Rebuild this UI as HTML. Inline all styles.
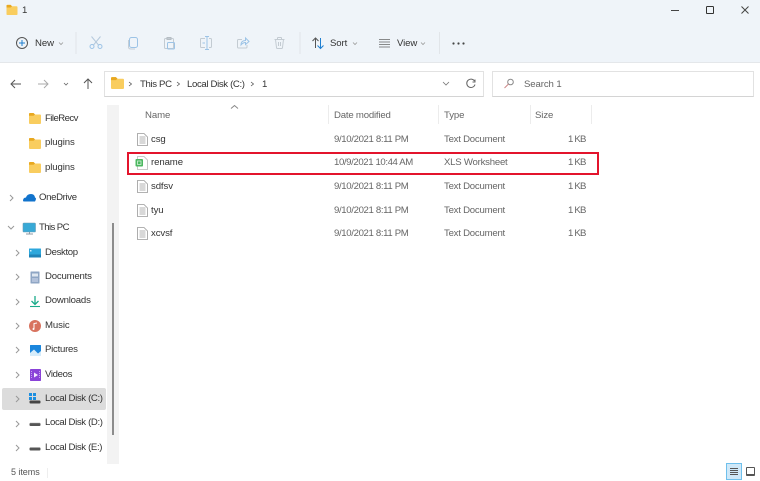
<!DOCTYPE html>
<html><head><meta charset="utf-8">
<style>
html,body{margin:0;padding:0}
body{width:760px;height:481px;position:relative;overflow:hidden;background:#fff;font-family:"Liberation Sans",sans-serif;font-size:9.6px;color:#333}
#w{position:absolute;left:0;top:0;width:760px;height:481px;filter:blur(.35px)}
.t{position:absolute;white-space:nowrap;line-height:12px;letter-spacing:-.35px}
.g{color:#666}
.n{letter-spacing:-.1px}
.y{letter-spacing:-.23px}
.k{letter-spacing:-.8px}
svg{position:absolute;overflow:visible}
.a{position:absolute}
</style></head><body><div id="w">
<div class="a" style="left:0;top:0;width:760px;height:62px;background:#eff4f9;border-bottom:1px solid #e4e7ea"></div>
<svg style="left:6px;top:4px" width="12" height="11" viewBox="0 0 12 12"><path d="M0 2.500Q0 1 1 1H4.500L6 2.500H11Q12 2.500 12 3.500V11Q12 12 11 12H1Q0 12 0 11Z" fill="#f9cd5f"/><path d="M0 1.800Q0 1 1 1H4.500L6 2.500L4.500 3.800H0Z" fill="#e8a820"/></svg>
<div class="t" style="left:22px;top:5px">1</div>
<svg style="left:0;top:0" width="760" height="62" fill="none" stroke="#333" stroke-width="1">
<path d="M671 10.500H679" stroke="#444"/><rect x="706.500" y="6.500" width="7" height="7" rx=".8" stroke="#333"/><path d="M741.500 6.500L748.500 13.500M748.500 6.500L741.500 13.500" stroke="#444"/>
<circle cx="22" cy="43" r="5.500" stroke="#555"/><path d="M22 40V46M19 43H25" stroke="#1f7fd0"/>
<path d="M59 42.500L61 44.500L63 42.500" stroke="#999" stroke-width=".8"/>
<path d="M91.500 36.500L98.500 45M100.500 36.500L93.500 45" stroke="#b5c9dc"/><circle cx="92" cy="46.500" r="2" stroke="#9cc3e6"/><circle cx="100" cy="46.500" r="2" stroke="#9cc3e6"/>
<rect x="129.500" y="37.500" width="8" height="10" rx="2" stroke="#9cc3e6"/><path d="M128.500 40V47Q128.500 49 131 49H135" stroke="#c5ced6"/>
<rect x="164.500" y="38.500" width="9" height="10" rx="1" stroke="#c3cbd2"/><rect x="167.500" y="42.500" width="7" height="6.500" rx="1" stroke="#9cc3e6"/><path d="M167 37.500H171V39.500H167Z" stroke="#b5bdc4"/>
<path d="M205 38.500H201Q200.500 38.500 200.500 39.500V46Q200.500 47.500 201 47.500H205M209 38.500H210.500Q211.500 38.500 211.500 39.500V46.500Q211.500 47.500 210.500 47.500H209" stroke="#c3cbd2"/><path d="M207 36.500V49.500M205 36.500H209M205 49.500H209M202.500 43H205" stroke="#9cc3e6"/>
<path d="M242 39.500H238.500Q237.500 39.500 237.500 40.500V47Q237.500 48 238.500 48H246Q247 48 247 47V45" stroke="#c3cbd2"/><path d="M241 45Q241 40.500 245.500 40.500V38L249 41.500L245.500 44.500V42.500Q243 42.500 241 45Z" stroke="#9cc3e6"/>
<path d="M274.500 39.500H284.500M277.500 39.500V38Q277.500 37.500 278 37.500H281Q281.500 37.500 281.500 38V39.500M275.500 39.500L276.500 47.500Q276.500 48.500 277.500 48.500H281.500Q282.500 48.500 282.500 47.500L283.500 39.500M278.500 42V46M280.500 42V46" stroke="#c3cbd2"/>
<path d="M315.500 48V38M312.500 41L315.500 38L318.500 41" stroke="#555"/><path d="M320.500 38V48.500M317.500 45.500L320.500 48.500L323.500 45.500" stroke="#1f7fd0"/>
<path d="M353 42.500L355 44.500L357 42.500" stroke="#999" stroke-width=".8"/>
<path d="M379 39.500H390M379 42H390M379 44.500H390M379 47H390" stroke="#666" stroke-width=".8"/>
<path d="M421 42.500L423 44.500L425 42.500" stroke="#999" stroke-width=".8"/>
<path d="M76 32V54M300 32V54M439.500 32V54" stroke="#e1e5e9"/>
</svg>
<svg style="left:452px;top:42px" width="14" height="3"><circle cx="1.500" cy="1.500" r="1.100" fill="#444"/><circle cx="6.500" cy="1.500" r="1.100" fill="#444"/><circle cx="11.500" cy="1.500" r="1.100" fill="#444"/></svg>
<div class="t n" style="left:35px;top:38px">New</div>
<div class="t n" style="left:330px;top:38px">Sort</div>
<div class="t n" style="left:397px;top:38px">View</div>

<!-- address -->
<div class="a" style="left:104px;top:71px;width:378px;height:24px;border:1px solid #e2e2e2;border-bottom-color:#d4d4d4"></div>
<div class="a" style="left:492px;top:71px;width:260px;height:24px;border:1px solid #e2e2e2;border-bottom-color:#d4d4d4"></div>
<svg style="left:0;top:62px" width="760" height="40" fill="none" stroke-width="1">
<path d="M21 22H11.500M15 18L11 22L15 26" stroke="#555"/>
<path d="M38 22H47.500M44 18L48 22L44 26" stroke="#aaa"/>
<path d="M64 21L66 23L68 21" stroke="#666" stroke-width=".8"/>
<path d="M88 27V17M84 21L88 17L92 21" stroke="#555"/>
<path d="M129 20L131.500 22L129 24M177 20L179.500 22L177 24M251 20L253.500 22L251 24" stroke="#555" stroke-width=".8"/>
<path d="M443 20L446 23L449 20" stroke="#777" stroke-width=".8"/>
<path d="M474.500 19A4.200 4.200 0 1 0 475 22.500M475 17.500V20H472.500" stroke="#666"/>
<circle cx="510.500" cy="20" r="2.800" stroke="#888"/><path d="M508.500 22L504.500 26" stroke="#c88"/>
</svg>
<svg style="left:111px;top:76px" width="13" height="13" viewBox="0 0 12 12"><path d="M0 2.500Q0 1 1 1H4.500L6 2.500H11Q12 2.500 12 3.500V11Q12 12 11 12H1Q0 12 0 11Z" fill="#f9cd5f"/><path d="M0 1.800Q0 1 1 1H4.500L6 2.500L4.500 3.800H0Z" fill="#e8a820"/></svg>
<div class="t" style="left:140px;top:79px">This PC</div>
<div class="t" style="left:187px;top:79px">Local Disk (C:)</div>
<div class="t" style="left:262px;top:79px">1</div>
<div class="t g n" style="left:524px;top:79px">Search 1</div>

<!-- sidebar -->
<div class="a" style="left:107px;top:105px;width:12px;height:359px;background:#f3f3f3"></div>
<div class="a" style="left:112px;top:223px;width:2px;height:212px;background:#8c8c8c"></div>
<div class="a" style="left:2px;top:388px;width:104px;height:22px;background:#dcdcdc;border-radius:2px"></div>

<svg style="left:29px;top:112px" width="12" height="12" viewBox="0 0 12 12"><path d="M0 2.500Q0 1 1 1H4.500L6 2.500H11Q12 2.500 12 3.500V11Q12 12 11 12H1Q0 12 0 11Z" fill="#f9cd5f"/><path d="M0 1.800Q0 1 1 1H4.500L6 2.500L4.500 3.800H0Z" fill="#e8a820"/></svg>
<svg style="left:29px;top:137px" width="12" height="12" viewBox="0 0 12 12"><path d="M0 2.500Q0 1 1 1H4.500L6 2.500H11Q12 2.500 12 3.500V11Q12 12 11 12H1Q0 12 0 11Z" fill="#f9cd5f"/><path d="M0 1.800Q0 1 1 1H4.500L6 2.500L4.500 3.800H0Z" fill="#e8a820"/></svg>
<svg style="left:29px;top:161px" width="12" height="12" viewBox="0 0 12 12"><path d="M0 2.500Q0 1 1 1H4.500L6 2.500H11Q12 2.500 12 3.500V11Q12 12 11 12H1Q0 12 0 11Z" fill="#f9cd5f"/><path d="M0 1.800Q0 1 1 1H4.500L6 2.500L4.500 3.800H0Z" fill="#e8a820"/></svg>
<div class="t" style="left:45px;top:113px;letter-spacing:-.55px">FileRecv</div>
<div class="t n" style="left:45px;top:137px">plugins</div>
<div class="t n" style="left:45px;top:162px">plugins</div>
<div class="t" style="left:39px;top:192px">OneDrive</div>
<div class="t" style="left:39px;top:222px;letter-spacing:-.6px">This PC</div>
<div class="t" style="left:45px;top:247px">Desktop</div>
<div class="t" style="left:45px;top:271px;letter-spacing:-.2px">Documents</div>
<div class="t" style="left:45px;top:295px;letter-spacing:-.2px">Downloads</div>
<div class="t n" style="left:45px;top:320px">Music</div>
<div class="t" style="left:45px;top:344px;letter-spacing:-.25px">Pictures</div>
<div class="t" style="left:45px;top:369px">Videos</div>
<div class="t" style="left:45px;top:393px">Local Disk (C:)</div>
<div class="t" style="left:45px;top:417px">Local Disk (D:)</div>
<div class="t" style="left:45px;top:442px">Local Disk (E:)</div>
<svg style="left:0;top:0" width="60" height="481" fill="none">
<g stroke="#999" stroke-width="1">
<path d="M10 195L13 198L10 201M8 226L11 229L14 226M16 250L19 253L16 256M16 274L19 277L16 280M16 299L19 302L16 305M16 323L19 326L16 329M16 347L19 350L16 353M16 372L19 375L16 378M16 396L19 399L16 402M16 421L19 424L16 427M16 445L19 448L16 451"/>
</g>
<path d="M23 201Q23 197.500 26 197.500Q27 194 31 194Q34.500 194 35 197.500Q37 198 35 201.500H24.500Q23 201.500 23 201Z" fill="#1173cc"/>
<rect x="23" y="223" width="12.500" height="9" rx=".8" fill="#38a9d6" stroke="#6a9cb5" stroke-width=".6"/><path d="M26 234H33" stroke="#8d9aa5"/><path d="M29.500 232V234" stroke="#8d9aa5"/>
<rect x="29" y="248.500" width="12" height="9" rx=".5" fill="#2da7dc"/><path d="M29 254.500H41V257.500H29Z" fill="#1f83b8"/><rect x="30" y="250" width="1.500" height="1.500" fill="#cdeefc"/>
<rect x="30.500" y="271.500" width="9" height="12" rx=".5" fill="#8fa6c4"/><rect x="32" y="273.500" width="6" height="3" fill="#dfe7f0"/><path d="M32 279H38M32 281H38" stroke="#eef" stroke-width=".7"/>
<path d="M35 296V304M31.500 301L35 304.500L38.500 301" stroke="#1aab8a" stroke-width="1.300"/><path d="M30 306.500H40" stroke="#1aab8a" stroke-width="1.100"/>
<circle cx="35" cy="326" r="6" fill="#d8735f"/><path d="M34 329V323.500L37 323" stroke="#fff" stroke-width="1"/><circle cx="33.500" cy="329" r="1" fill="#fff"/>
<rect x="30" y="345" width="11" height="11" rx=".5" fill="#1b86dd"/><path d="M30 353L34 349.500L38 353.500L41 351V356H30Z" fill="#d5ecfb"/>
<rect x="30" y="369" width="11" height="12" rx=".8" fill="#8a42d8"/><path d="M34 372.500L38 375L34 377.500Z" fill="#f3e8ff"/><path d="M31.500 371V379M39.500 371V379" stroke="#c8a2ee" stroke-dasharray="1 1"/>
<rect x="29" y="393" width="3" height="3" fill="#1d8fe0"/><rect x="33" y="393" width="3" height="3" fill="#1d8fe0"/><rect x="29" y="397" width="3" height="3" fill="#1d8fe0"/><rect x="33" y="397" width="3" height="3" fill="#1d8fe0"/>
<rect x="29.500" y="400.500" width="11" height="3" rx="1" fill="#444"/>
<rect x="29.500" y="423" width="11" height="3" rx="1" fill="#555"/><path d="M30 423H40" stroke="#aaa" stroke-width=".5"/>
<rect x="29.500" y="447.500" width="11" height="3" rx="1" fill="#555"/><path d="M30 447.500H40" stroke="#aaa" stroke-width=".5"/>
</svg>

<!-- list header -->
<svg style="left:120px;top:100px" width="480" height="30" fill="none">
<path d="M111 8.500L114.500 5.500L118 8.500" stroke="#888"/>
<path d="M208.500 5V24M318.500 5V24M410.500 5V24M471.500 5V24" stroke="#ececec"/>
</svg>
<div class="t g n" style="left:145px;top:110px">Name</div>
<div class="t g" style="left:334px;top:110px;letter-spacing:-.2px">Date modified</div>
<div class="t g n" style="left:444px;top:110px">Type</div>
<div class="t g n" style="left:535px;top:110px">Size</div>

<!-- rows -->
<div class="t n" style="left:151px;top:134px">csg</div>
<div class="t n" style="left:151px;top:157px">rename</div>
<div class="t n" style="left:151px;top:181px">sdfsv</div>
<div class="t n" style="left:151px;top:205px">tyu</div>
<div class="t n" style="left:151px;top:228px">xcvsf</div>

<div class="t g" style="left:334px;top:134px">9/10/2021 8:11 PM</div>
<div class="t g" style="left:334px;top:157px;letter-spacing:-.39px">10/9/2021 10:44 AM</div>
<div class="t g" style="left:334px;top:181px">9/10/2021 8:11 PM</div>
<div class="t g" style="left:334px;top:205px">9/10/2021 8:11 PM</div>
<div class="t g" style="left:334px;top:228px">9/10/2021 8:11 PM</div>

<div class="t g y" style="left:444px;top:134px">Text Document</div>
<div class="t g y" style="left:444px;top:157px">XLS Worksheet</div>
<div class="t g y" style="left:444px;top:181px">Text Document</div>
<div class="t g y" style="left:444px;top:205px">Text Document</div>
<div class="t g y" style="left:444px;top:228px">Text Document</div>

<div class="t g k" style="left:568px;top:134px">1 KB</div>
<div class="t g k" style="left:568px;top:157px">1 KB</div>
<div class="t g k" style="left:568px;top:181px">1 KB</div>
<div class="t g k" style="left:568px;top:205px">1 KB</div>
<div class="t g k" style="left:568px;top:228px">1 KB</div>

<svg style="left:130px;top:125px" width="30" height="120" fill="none" stroke-width=".8">
<g stroke="#999">
<path d="M7.500 8.500H14L17.500 12V20.500H7.500Z"/><path d="M9.500 12H15.500M9.500 14H15.500M9.500 16H15.500M9.500 18H15.500" stroke="#999"/>
<path d="M7.500 55.500H14L17.500 59V67.500H7.500Z"/><path d="M9.500 59H15.500M9.500 61H15.500M9.500 63H15.500M9.500 65H15.500" stroke="#999"/>
<path d="M7.500 79.500H14L17.500 83V91.500H7.500Z"/><path d="M9.500 83H15.500M9.500 85H15.500M9.500 87H15.500M9.500 89H15.500" stroke="#999"/>
<path d="M7.500 102.500H14L17.500 106V114.500H7.500Z"/><path d="M9.500 106H15.500M9.500 108H15.500M9.500 110H15.500M9.500 112H15.500" stroke="#999"/>
<path d="M7.500 31.500H14L17.500 35V44.500H7.500Z" stroke="#b8b8b8"/>
</g>
<rect x="5.500" y="34" width="7.500" height="7.500" rx="1" fill="#4cb860"/><path d="M7.500 36H11V39.500H7.500Z" stroke="#d6f2dc"/>
</svg>

<!-- red box -->
<div class="a" style="left:127px;top:152px;width:468px;height:19px;border:2px solid #e3142c"></div>

<!-- status -->
<div class="t" style="left:11px;top:466px;font-size:9px;color:#555;letter-spacing:-.05px">5 items</div>
<div class="a" style="left:47px;top:468px;width:1px;height:10px;background:#eee"></div>
<div class="a" style="left:726px;top:463px;width:14px;height:15px;background:#cfe8f8;border:1px solid #6fc0ec"></div>
<svg style="left:726px;top:463px" width="34" height="17" fill="none">
<path d="M4 5.500H12M4 7.500H12M4 9.500H12M4 11.500H12" stroke="#555"/>
<rect x="20.500" y="4.500" width="8" height="8" rx=".5" stroke="#555"/><path d="M20.500 12H28.500" stroke="#555" stroke-width="2"/>
</svg>
</div></body></html>
